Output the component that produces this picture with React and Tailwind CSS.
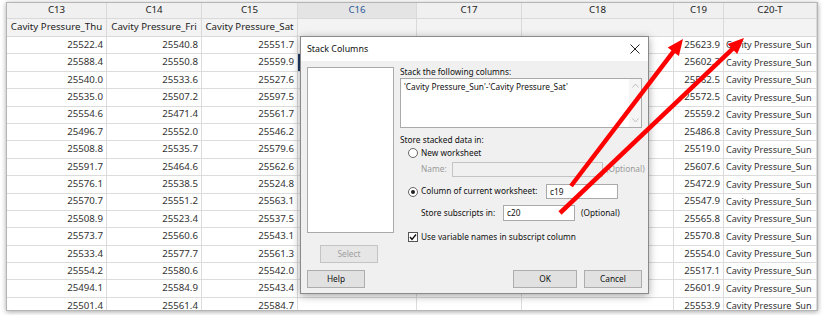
import React from 'react';

const cols = [
  { name: 'C13', w: 100 },
  { name: 'C14', w: 95 },
  { name: 'C15', w: 96 },
  { name: 'C16', w: 119 },
  { name: 'C17', w: 105 },
  { name: 'C18', w: 152 },
  { name: 'C19', w: 50 },
  { name: 'C20-T', w: 93 },
];

const names = ['Cavity Pressure_Thu', 'Cavity Pressure_Fri', 'Cavity Pressure_Sat', '', '', '', '', ''];

const c13 = ['25522.4', '25588.4', '25540.0', '25535.0', '25554.6', '25496.7', '25508.8', '25591.7', '25576.1', '25570.7', '25508.9', '25573.7', '25533.4', '25554.2', '25494.1', '25501.4'];
const c14 = ['25540.8', '25550.8', '25533.6', '25507.2', '25471.4', '25552.0', '25535.7', '25464.6', '25538.5', '25551.2', '25523.4', '25560.6', '25577.7', '25580.6', '25584.9', '25561.4'];
const c15 = ['25551.7', '25559.9', '25527.6', '25597.5', '25561.7', '25546.2', '25579.6', '25562.6', '25524.8', '25563.1', '25537.5', '25543.1', '25561.3', '25542.0', '25543.4', '25584.7'];
const c19 = ['25623.9', '25602.3', '25562.5', '25572.5', '25559.2', '25486.8', '25519.0', '25607.6', '25472.9', '25547.9', '25565.8', '25570.8', '25554.0', '25517.1', '25601.9', '25553.9'];

const font = { fontFamily: '"Noto Sans", "Open Sans", sans-serif' };

function Arrow({ x1, y1, x2, y2 }) {
  const dx = x2 - x1;
  const dy = y2 - y1;
  const len = Math.hypot(dx, dy);
  const ux = dx / len;
  const uy = dy / len;
  const hl = 16;
  const hw = 7;
  const bx = x2 - ux * hl;
  const by = y2 - uy * hl;
  const pts = `${x2},${y2} ${bx - uy * hw},${by + ux * hw} ${bx + uy * hw},${by - ux * hw}`;
  return (
    <g>
      <line x1={x1} y1={y1} x2={bx + ux * 2} y2={by + uy * 2} stroke="#ff0000" strokeWidth="4.5" />
      <polygon points={pts} fill="#ff0000" />
    </g>
  );
}

function Btn({ children, disabled, className = '' }) {
  return (
    <div
      className={`h-[18px] shrink-0 flex items-center justify-center border ${disabled ? 'text-[#a0a0a0] border-[#c4c4c4] bg-[#e6e6e6]' : 'text-[#111] border-[#adadad] bg-[#e1e1e1]'} ${className}`}
    >
      {children}
    </div>
  );
}

function Radio({ checked }) {
  return (
    <div className="w-[10px] h-[10px] shrink-0 rounded-full border border-[#666] bg-white flex items-center justify-center">
      {checked && <div className="w-[4px] h-[4px] rounded-full bg-[#222]" />}
    </div>
  );
}

function Dialog() {
  return (
    <div className="absolute left-[300px] top-[36px] w-[349px] h-[258px] border border-[#8a8a8a] bg-[#f0f0f0] shadow-[0_2px_8px_rgba(0,0,0,0.35)] flex flex-col text-[8.3px] text-[#111] whitespace-nowrap">
      <div className="h-[24px] bg-white flex items-center justify-between pl-[6px] pr-[8px]">
        <span className="text-[8.9px]">Stack Columns</span>
        <svg width="10" height="10" viewBox="0 0 10 10">
          <path d="M0.5 0.5 L9.5 9.5 M9.5 0.5 L0.5 9.5" stroke="#222" strokeWidth="1" />
        </svg>
      </div>
      <div className="flex-1 flex flex-col px-[6px] pt-[6px] pb-[5px]">
        <div className="flex flex-1">
          <div className="w-[87px] shrink-0 flex flex-col">
            <div className="h-[166px] bg-white border border-[#aaaaaa]" />
            <Btn disabled className="w-[58px] ml-[13px] mt-[12px]">Select</Btn>
          </div>
          <div className="flex-1 ml-[6px] flex flex-col">
            <div className="leading-[12px] mt-[-1px]">Stack the following columns:</div>
            <div className="h-[50px] w-[242px] bg-white border border-[#aaaaaa] flex">
              <div className="flex-1 pl-[3px] pt-[2px] leading-[12px]">'Cavity Pressure_Sun'-'Cavity Pressure_Sat'</div>
              <div className="w-[12px] bg-[#f5f5f5] flex flex-col items-center justify-between py-[4px]">
                <svg width="7" height="5" viewBox="0 0 7 5"><path d="M0.5 4.5 L3.5 1 L6.5 4.5" fill="none" stroke="#c0c0c0" /></svg>
                <svg width="7" height="5" viewBox="0 0 7 5"><path d="M0.5 0.5 L3.5 4 L6.5 0.5" fill="none" stroke="#c0c0c0" /></svg>
              </div>
            </div>
            <div className="mt-[6px] leading-[12px]">Store stacked data in:</div>
            <div className="ml-[8px] flex items-center gap-[3px] h-[14px]">
              <Radio />
              <span>New worksheet</span>
            </div>
            <div className="mt-[2px] ml-[21px] flex items-center h-[15px] text-[#9a9a9a]">
              <span className="w-[31px]">Name:</span>
              <div className="w-[151px] h-[15px] border border-[#c4c4c4] bg-[#f0f0f0]" />
              <span className="ml-[3px]">(Optional)</span>
            </div>
            <div className="mt-[7px] ml-[8px] flex items-center h-[15px]">
              <Radio checked />
              <span className="ml-[3px] w-[125px]">Column of current worksheet:</span>
              <div className="w-[72px] h-[15px] border border-[#aaaaaa] bg-white pl-[3px] leading-[13px]">c19</div>
            </div>
            <div className="mt-[6px] ml-[21px] flex items-center h-[16px]">
              <span className="w-[82px]">Store subscripts in:</span>
              <div className="w-[72px] h-[16px] border border-[#aaaaaa] bg-white pl-[3px] leading-[14px]">c20</div>
              <span className="ml-[6px]">(Optional)</span>
            </div>
            <div className="mt-[9px] ml-[8px] flex items-center h-[14px]">
              <div className="w-[10px] h-[10px] border border-[#555] bg-white flex items-center justify-center">
                <svg width="8" height="8" viewBox="0 0 8 8"><path d="M1 4 L3 6.5 L7 1.5" fill="none" stroke="#111" strokeWidth="1.4" /></svg>
              </div>
              <span className="ml-[3px]">Use variable names in subscript column</span>
            </div>
          </div>
        </div>
        <div className="flex items-center">
          <Btn className="w-[58px]">Help</Btn>
          <div className="flex-1" />
          <Btn className="w-[64px] border-[#777]">OK</Btn>
          <Btn className="w-[58px] ml-[7px]">Cancel</Btn>
        </div>
      </div>
    </div>
  );
}

export default function App() {
  const rows = c13.map((v, i) => [v, c14[i], c15[i], '', '', '', c19[i], 'Cavity Pressure_Sun']);
  return (
    <div className="w-[822px] h-[315px] bg-white relative overflow-hidden" style={font}>
      <div className="absolute left-[6px] top-[2px] w-[812px] h-[309px] border border-[#b5b5b5] bg-white shadow-[0_1px_5px_rgba(0,0,0,0.35)] overflow-hidden text-[9.7px] text-[#333]">
        <div className="flex h-[16px] bg-[#f0f0f0] border-b border-[#d9d9d9]">
          {cols.map((c, i) => (
            <div
              key={c.name}
              style={{ width: c.w }}
              className={`shrink-0 flex items-center justify-center border-r border-[#d9d9d9] ${i === 3 ? 'bg-[#e4e4e4] text-[#2a5a9a]' : 'text-[#222]'}`}
            >
              {c.name}
            </div>
          ))}
        </div>
        <div className="flex h-[18px] bg-[#f3f3f3] border-b border-[#d9d9d9]">
          {cols.map((c, i) => (
            <div key={c.name} style={{ width: c.w }} className="shrink-0 flex items-center justify-center border-r border-[#d9d9d9] text-[#222] whitespace-nowrap">
              {names[i]}
            </div>
          ))}
        </div>
        {rows.map((r, ri) => (
          <div key={ri} className="flex h-[17.4px] border-b border-[#dcdcdc]">
            {cols.map((c, i) => (
              <div
                key={c.name}
                style={{ width: c.w }}
                className={`shrink-0 flex items-center border-r border-[#dcdcdc] whitespace-nowrap overflow-hidden ${i === 7 ? 'justify-start pl-[2px] text-[9.1px]' : 'justify-end pr-[3px]'} ${i === 3 && ri === 1 ? 'shadow-[inset_2px_0_0_#1f3a66]' : ''}`}
              >
                {r[i]}
              </div>
            ))}
          </div>
        ))}
      </div>
      <Dialog />
      <svg className="absolute inset-0 pointer-events-none" width="822" height="315">
        <Arrow x1={571} y1={186} x2={683} y2={39} />
        <Arrow x1={560} y1={213} x2={744} y2={38} />
      </svg>
    </div>
  );
}
